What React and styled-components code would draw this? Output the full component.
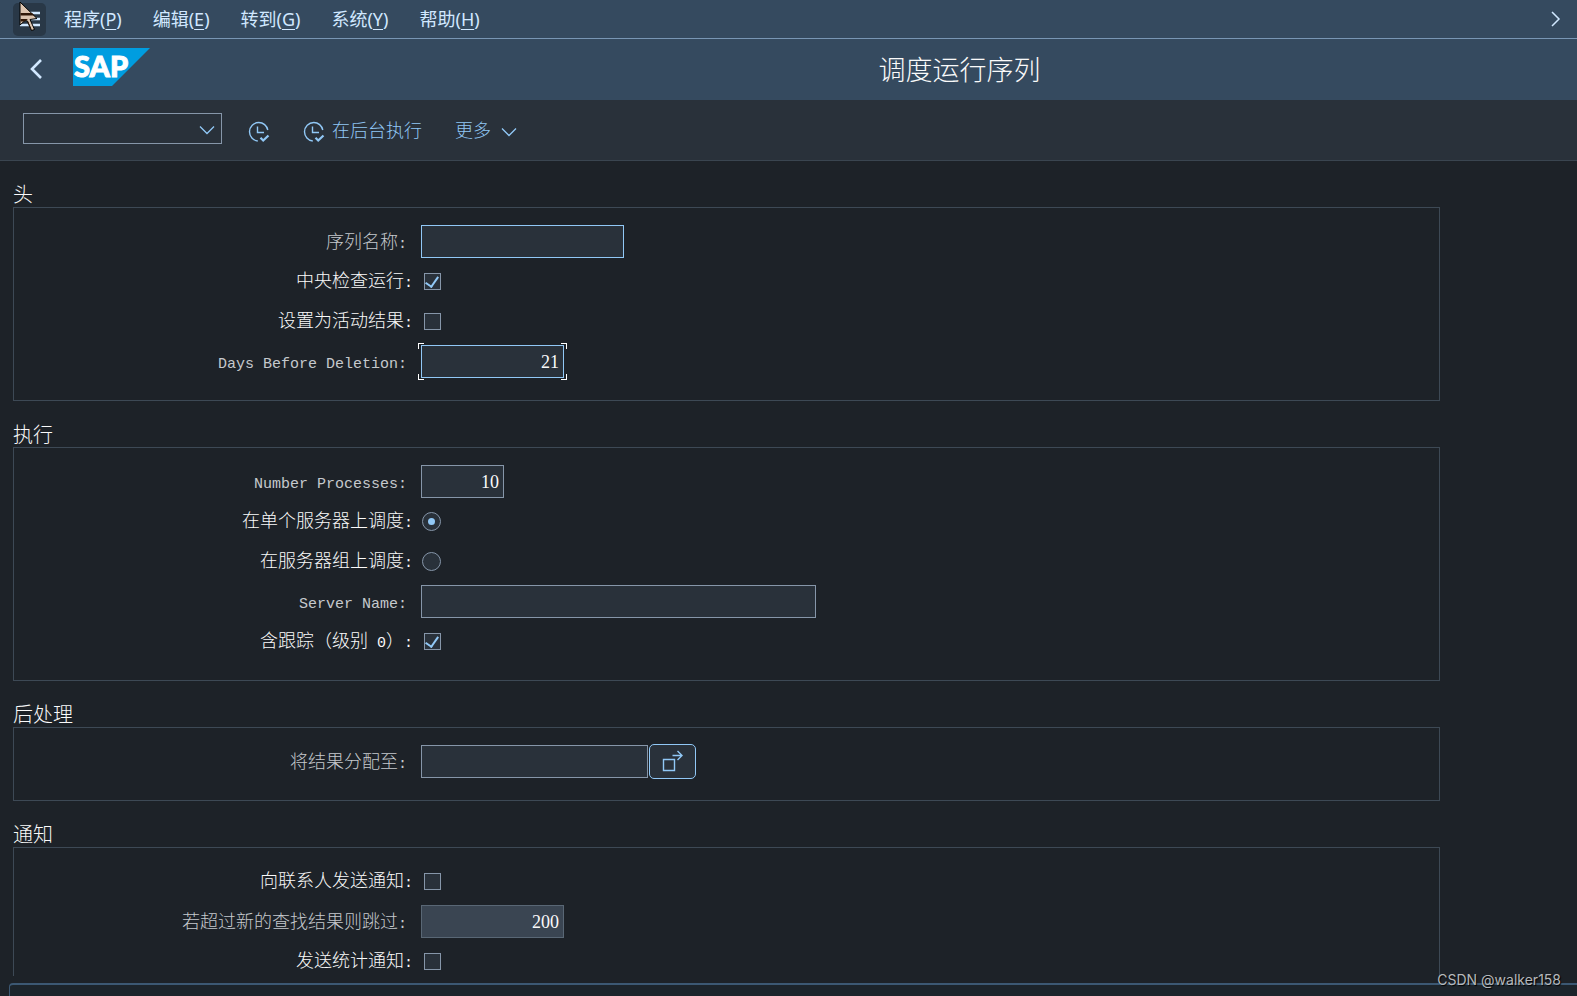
import React from "react";
import styled, { createGlobalStyle, css } from "styled-components";

const MENUS = [
  { text: "程序", key: "P" },
  { text: "编辑", key: "E" },
  { text: "转到", key: "G" },
  { text: "系统", key: "Y" },
  { text: "帮助", key: "H" },
];

const ClockIcon = () => (
  <svg width="22" height="22" viewBox="0 0 22 22" fill="none" stroke="currentColor">
    <path d="M19.8 9A9.3 9.3 0 0 0 10.8 1.5A9.3 9.3 0 0 0 1.5 10.8A9.3 9.3 0 0 0 9.8 20" strokeWidth="1.4" />
    <path d="M9.5 5.5V11.5H16" strokeWidth="1.4" />
    <path d="M12.5 16.8L15.2 19.5L20.5 14.5" strokeWidth="2.2" />
  </svg>
);

const ChevronDown = () => (
  <svg width="16" height="10" viewBox="0 0 16 10" fill="none" stroke="currentColor" strokeWidth="1.3">
    <path d="M1 1.5L8 8.5L15 1.5" />
  </svg>
);

const SapLogo = () => (
  <svg width="77" height="38" viewBox="0 0 77 38" role="img" aria-label="SAP">
    <path d="M0 0H77L39 38H0Z" fill="#009de0" />
    <text x="1" y="29" fill="#fff" stroke="#fff" strokeWidth="1" fontFamily="Lato, sans-serif" fontSize="29" fontWeight="900">
      SAP
    </text>
  </svg>
);

const Field = ({ id, label, compact, children }) => (
  <Row>
    <Label htmlFor={id} $compact={compact}>
      {label}
      <Half>:</Half>
    </Label>
    {children}
  </Row>
);

const Group = ({ title, children }) => (
  <section>
    <GroupTitle>{title}</GroupTitle>
    <GroupBox>{children}</GroupBox>
  </section>
);

const App = () => {
  return (
    <Page>
      <GlobalStyle />
      <MenuBar>
        <MenuButton aria-label="菜单">
          <svg width="20" height="16" viewBox="0 0 20 16" stroke="currentColor" strokeWidth="2.4">
            <path d="M0 2H20M0 8H20M0 14H20" />
          </svg>
          <Pointer width="20" height="32" viewBox="0 0 20 32">
            <path d="M1 1V24L6 19.5L8.5 20L12.5 29.5L15.5 28.5L11 18.5L18 17.5Z" fill="#dcc5b0" stroke="#000" />
            <path d="M1.5 12H13L15.5 14.5H1.5ZM1.5 18H9L5.5 20.5H1.5Z" fill="#301808" />
            <path d="M8.5 20.5L12 28.5" stroke="#301808" />
          </Pointer>
        </MenuButton>
        {MENUS.map((menu) => (
          <MenuItem key={menu.key}>
            {menu.text}(<u>{menu.key}</u>)
          </MenuItem>
        ))}
        <MoreMenus aria-label="下一个">
          <svg width="10" height="16" viewBox="0 0 10 16" fill="none" stroke="currentColor" strokeWidth="1.5">
            <path d="M1 1L8 8L1 15" />
          </svg>
        </MoreMenus>
      </MenuBar>

      <Header>
        <HeaderNav>
          <BackButton aria-label="返回">
            <svg width="12" height="20" viewBox="0 0 12 20" fill="none" stroke="currentColor" strokeWidth="2.6">
              <path d="M11 1L2 10L11 19" />
            </svg>
          </BackButton>
          <SapLogo />
        </HeaderNav>
        <Title>调度运行序列</Title>
      </Header>

      <Toolbar>
        <SelectWrapper>
          <Command aria-label="命令" defaultValue="">
            <option value="" />
          </Command>
          <ChevronDown />
        </SelectWrapper>
        <ToolButton aria-label="执行">
          <ClockIcon />
        </ToolButton>
        <ToolButton>
          <ClockIcon />
          在后台执行
        </ToolButton>
        <ToolButton $wide>
          更多
          <ChevronDown />
        </ToolButton>
      </Toolbar>

      <Content>
        <Group title="头">
          <Field id="name" label="序列名称">
            <TextInput id="name" $width={203} $active />
          </Field>
          <Field id="central" label="中央检查运行" compact>
            <Check id="central" type="checkbox" defaultChecked />
          </Field>
          <Field id="active" label="设置为活动结果" compact>
            <Check id="active" type="checkbox" />
          </Field>
          <Field id="days" label={<Half>Days Before Deletion</Half>}>
            <FocusFrame>
              <TextInput id="days" $width={143} $active defaultValue="21" />
            </FocusFrame>
          </Field>
        </Group>

        <Group title="执行">
          <Field id="processes" label={<Half>Number Processes</Half>}>
            <TextInput id="processes" $width={83} defaultValue="10" />
          </Field>
          <Field id="single" label="在单个服务器上调度" compact>
            <Radio id="single" type="radio" name="target" defaultChecked />
          </Field>
          <Field id="group" label="在服务器组上调度" compact>
            <Radio id="group" type="radio" name="target" />
          </Field>
          <Field id="server" label={<Half>Server Name</Half>}>
            <TextInput id="server" $width={395} />
          </Field>
          <Field id="trace" label={<>含跟踪（级别<Half> 0</Half>）</>} compact>
            <Check id="trace" type="checkbox" defaultChecked />
          </Field>
        </Group>

        <Group title="后处理">
          <Field id="assign" label="将结果分配至">
            <TextInput id="assign" $width={227} />
            <SelectionButton aria-label="多项选择">
              <svg width="22" height="22" viewBox="0 0 22 22" fill="none" stroke="currentColor" strokeWidth="1.4">
                <path d="M1.5 9.5H12.5V20.5H1.5ZM10.5 5.5H20M15.5 1L20 5.5L15.5 10" />
              </svg>
            </SelectionButton>
          </Field>
        </Group>

        <Group title="通知">
          <Field id="contact" label="向联系人发送通知" compact>
            <Check id="contact" type="checkbox" />
          </Field>
          <Field id="skip" label="若超过新的查找结果则跳过">
            <TextInput id="skip" $width={143} readOnly value="200" />
          </Field>
          <Field id="stats" label="发送统计通知" compact>
            <Check id="stats" type="checkbox" />
          </Field>
          <Row />
        </Group>
      </Content>

      <StatusBar />
      <Watermark>CSDN @walker158</Watermark>
    </Page>
  );
};

export default App;

const GlobalStyle = createGlobalStyle`
  * {
    box-sizing: border-box;
  }
  body {
    margin: 0;
    background: #1d2228;
    color: #fafafa;
    font-family: "Noto Sans", "Noto Sans CJK SC", sans-serif;
    font-size: 18px;
  }
  button, input, select {
    margin: 0;
    font: inherit;
    color: inherit;
  }
  button {
    padding: 0;
    border: none;
    background: none;
  }
  svg {
    display: block;
    flex: none;
  }
`;

const Page = styled.div`
  position: relative;
  display: flex;
  flex-direction: column;
  height: 100vh;
  overflow: hidden;
`;

const MenuBar = styled.nav`
  display: flex;
  flex: none;
  align-items: center;
  gap: 31px;
  height: 39px;
  padding: 0 16px 0 13px;
  border-bottom: 1px solid #7996b4;
  background: #354a5f;
  color: #d1e8ff;
`;

const MenuButton = styled.button`
  position: relative;
  display: flex;
  align-items: center;
  justify-content: center;
  width: 33px;
  height: 33px;
  margin-right: -13px;
  border-radius: 5px;
  background: #293847;
`;

const Pointer = styled.svg`
  position: absolute;
  top: -2px;
  left: 6px;
`;

const MenuItem = styled.button`
  line-height: 24px;
  white-space: nowrap;
  u {
    text-underline-offset: 3px;
  }
`;

const MoreMenus = styled.button`
  margin-left: auto;
`;

const Header = styled.header`
  display: flex;
  flex: none;
  align-items: center;
  height: 61px;
  background: #354a5f;
`;

const HeaderNav = styled.div`
  display: flex;
  flex: 0 0 342px;
  align-items: center;
  gap: 31px;
  height: 56px;
  padding-left: 30px;
  align-self: flex-start;
`;

const BackButton = styled.button`
  padding-top: 4px;
  color: #d1e8ff;
`;

const Title = styled.h1`
  flex: 1;
  margin: 0;
  font-size: 27px;
  font-weight: 300;
  line-height: 40px;
  text-align: center;
`;

const Toolbar = styled.div`
  display: flex;
  flex: none;
  align-items: center;
  gap: 33px;
  height: 61px;
  padding-left: 23px;
  border-bottom: 1px solid #3a4550;
  background: #29313a;
  color: #91c8f6;
`;

const SelectWrapper = styled.div`
  position: relative;
  width: 199px;
  margin: 0 -7px 3px 0;
  svg {
    position: absolute;
    top: 12px;
    right: 7px;
    pointer-events: none;
  }
`;

const Command = styled.select`
  display: block;
  width: 100%;
  height: 31px;
  border: 1px solid #8696a9;
  background: #29313a;
  appearance: none;
`;

const ToolButton = styled.button`
  display: flex;
  align-items: center;
  gap: ${(props) => (props.$wide ? 10 : 7)}px;
  font-weight: 300;
  line-height: 24px;
  svg {
    margin-top: 3px;
  }
`;

const Content = styled.main`
  flex: 1;
  min-height: 0;
  padding: 0 137px 0 13px;
  overflow: hidden;
`;

const GroupTitle = styled.h2`
  margin: 0;
  padding-top: 21px;
  font-size: 20px;
  font-weight: 300;
  line-height: 25px;
`;

const GroupBox = styled.div`
  padding: 13px 0 19px;
  border: 1px solid #3d4955;
`;

const Row = styled.div`
  display: flex;
  align-items: center;
  height: 40px;
`;

const Label = styled.label`
  width: ${(props) => (props.$compact ? 399 : 393)}px;
  margin-right: ${(props) => (props.$compact ? 11 : 14)}px;
  padding-top: ${(props) => (props.$compact ? 2 : 4)}px;
  color: ${(props) => (props.$compact ? "#fafafa" : "#c5c9cd")};
  font-weight: 300;
  line-height: 24px;
  text-align: right;
  white-space: pre;
`;

const Half = styled.span`
  font-family: "Liberation Mono", monospace;
  font-size: 15px;
`;

const TextInput = styled.input`
  width: ${(props) => props.$width}px;
  height: 33px;
  padding: 2px 4px 0;
  border: 1px solid ${(props) => (props.$active ? "#91c8f6" : "#8696a9")};
  border-radius: 0;
  outline: none;
  background: #29313a;
  font-family: "Liberation Serif", serif;
  text-align: right;
  ${(props) =>
    props.readOnly &&
    css`
      border-color: #596775;
      background: #3a4552;
    `}
`;

const FocusFrame = styled.div`
  --corner: linear-gradient(#fff, #fff);
  margin: 0 -3px;
  padding: 1px 2px;
  border: 1px solid transparent;
  background:
    var(--corner) 0 0 / 6px 1px, var(--corner) 0 0 / 1px 6px,
    var(--corner) 100% 0 / 6px 1px, var(--corner) 100% 0 / 1px 6px,
    var(--corner) 0 100% / 6px 1px, var(--corner) 0 100% / 1px 6px,
    var(--corner) 100% 100% / 6px 1px, var(--corner) 100% 100% / 1px 6px;
  background-repeat: no-repeat;
  background-origin: border-box;
  input {
    display: block;
  }
`;

const Check = styled.input`
  display: grid;
  place-items: center;
  width: 17px;
  height: 17px;
  border: 1px solid #8696a9;
  background: #29313a;
  appearance: none;
  &:checked::after {
    content: "";
    width: 6px;
    height: 11px;
    margin: 0 2px 4px 0;
    border: solid #91c8f6;
    border-width: 0 2px 2px 0;
    transform: rotate(35deg);
  }
`;

const Radio = styled(Check)`
  width: 19px;
  height: 19px;
  margin-left: -2px;
  border-radius: 50%;
  &:checked::after {
    width: 7px;
    height: 7px;
    margin: 0;
    border: none;
    border-radius: 50%;
    background: #91c8f6;
    transform: none;
  }
`;

const SelectionButton = styled.button`
  display: flex;
  align-items: center;
  justify-content: center;
  width: 47px;
  height: 35px;
  margin-left: 1px;
  border: 1px solid #91c8f6;
  border-radius: 5px;
  background: #29313a;
  color: #91c8f6;
`;

const StatusBar = styled.footer`
  flex: none;
  height: 13px;
  margin: 7px 0 0 9px;
  border: solid #3c5873;
  border-width: 2px 0 0 1px;
  border-radius: 4px 0 0 0;
  background: #1c242b;
`;

const Watermark = styled.div`
  position: absolute;
  right: 16px;
  bottom: 6px;
  color: #b5b8bb;
  font-family: Inter, sans-serif;
  font-size: 14px;
  line-height: 20px;
  text-shadow: 1px 1px 1px #000;
`;
